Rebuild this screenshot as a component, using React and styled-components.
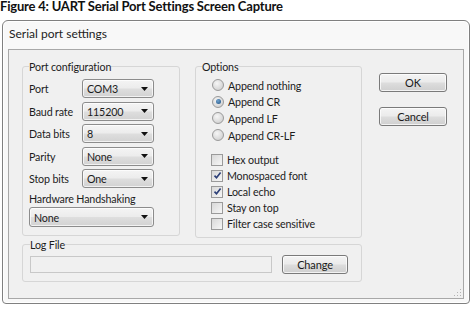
import React from "react";
import styled, { createGlobalStyle } from "styled-components";

const GlobalStyle = createGlobalStyle`
  html, body { margin: 0; padding: 0; background: #fff; }
  body { font-family: Lato, "Liberation Sans", sans-serif; color: #1c1c1c; }
`;

const Page = styled.div`
  width: 474px;
  height: 313px;
  overflow: hidden;
`;

const Caption = styled.div`
  height: 14px;
  overflow: hidden;
  font: bold 13px/12px Lato, "Liberation Sans", sans-serif;
  letter-spacing: -0.2px;
  white-space: nowrap;
  color: #111;
`;

const Window = styled.div`
  margin: 6px 0 0 2px;
  width: 468px;
  height: 284px;
  box-sizing: border-box;
  border: 1px solid #808080;
  border-radius: 6px 6px 4px 4px;
  background: #f8f8f8;
  box-shadow: inset 0 0 0 1px #fff;
  display: flex;
  flex-direction: column;
`;

const TitleBar = styled.div`
  height: 28px;
  padding: 0 0 4px 6px;
  box-sizing: border-box;
  display: flex;
  align-items: center;
  font-size: 12px;
  color: #222;
`;

const Client = styled.div`
  position: relative;
  margin-left: 5px;
  width: 456px;
  height: 250px;
  box-sizing: border-box;
  border: 1px solid #a8a8a8;
  background: #f0f0f0;
  padding: 10px 0 0 13px;
  font-size: 10.7px;
  letter-spacing: -0.15px;
`;

const TopRow = styled.div`
  display: flex;
  align-items: flex-start;
`;

const Group = styled.fieldset`
  margin: 0 ${(p) => p.$gap || 0}px 0 0;
  padding: ${(p) => p.$pad || "6px 6px 0"};
  width: ${(p) => p.$w}px;
  height: ${(p) => p.$h}px;
  box-sizing: border-box;
  border: 1px solid #d6d6d6;
  border-radius: 3px;
  min-width: 0;
`;

const Legend = styled.legend`
  padding: 0;
  font-size: 10.7px;
  line-height: 13px;
  color: #1c1c1c;
`;

const FieldGrid = styled.div`
  display: grid;
  grid-template-columns: 53px 72px;
  grid-auto-rows: 19px;
  row-gap: 3.5px;
  align-items: center;
`;

const Label = styled.span`
  white-space: nowrap;
`;

const Combo = styled.div`
  display: flex;
  align-items: center;
  justify-content: space-between;
  width: ${(p) => p.$w || 72}px;
  height: ${(p) => p.$h || 19}px;
  box-sizing: border-box;
  padding: 0 5px 0 4px;
  border: 1px solid #8c8c8c;
  border-radius: 3px;
  background: linear-gradient(#f4f4f4, #ececec 48%, #dedede 52%, #d2d2d2);
  box-shadow: inset 0 0 0 1px rgba(255, 255, 255, 0.7);
`;

const WideLabel = styled.div`
  margin-top: 4px;
  line-height: 13px;
`;

const WideCombo = styled(Combo)`
  margin-top: 2px;
`;

const OptionList = styled.div`
  display: flex;
  flex-direction: column;
  margin-top: ${(p) => p.$top}px;
`;

const OptionRow = styled.div`
  display: flex;
  align-items: center;
  gap: 4px;
  height: ${(p) => p.$h}px;
  padding-left: ${(p) => p.$indent}px;
  white-space: nowrap;
`;

const Radio = styled.span`
  position: relative;
  width: 12px;
  height: 12px;
  box-sizing: border-box;
  border-radius: 50%;
  border: 1px solid #9a9a9a;
  background: radial-gradient(circle at 40% 35%, #f6f6f6, #d6d6d6 70%, #c4c4c4);

  &::after {
    content: "";
    display: ${(p) => (p.$on ? "block" : "none")};
    position: absolute;
    left: 2.5px;
    top: 2.5px;
    width: 5px;
    height: 5px;
    border-radius: 50%;
    background: radial-gradient(circle at 40% 35%, #6fa3cf, #1f4f80);
  }
`;

const Check = styled.span`
  display: flex;
  align-items: center;
  justify-content: center;
  width: 12px;
  height: 12px;
  box-sizing: border-box;
  border: 1px solid #9a9a9a;
  background: linear-gradient(135deg, #d8d8d8, #f6f6f6);
`;

const ButtonColumn = styled.div`
  display: flex;
  flex-direction: column;
  gap: 15px;
  margin: 13px 0 0 17px;
`;

const Button = styled.div`
  display: flex;
  align-items: center;
  justify-content: center;
  width: ${(p) => p.$w}px;
  height: 19px;
  box-sizing: border-box;
  border: 1px solid #7a7a7a;
  border-radius: 3px;
  background: linear-gradient(#f4f4f4, #ebebeb 48%, #dddddd 52%, #cfcfcf);
  box-shadow: inset 0 0 0 1px rgba(255, 255, 255, 0.75);
  font-size: 11px;
  color: #1a1a1a;
`;

const LogRow = styled.div`
  display: flex;
  align-items: center;
  gap: 10px;
  margin-top: 4px;
`;

const PathField = styled.div`
  width: 242px;
  height: 17px;
  box-sizing: border-box;
  border: 1px solid #c8c8c8;
  background: #f0f0f0;
`;

const Grip = styled.div`
  position: absolute;
  right: 2px;
  bottom: 2px;
  width: 8px;
  height: 8px;
  background-image: radial-gradient(circle, #b4b4b4 0.9px, transparent 1px);
  background-size: 3px 3px;
  clip-path: polygon(100% 0, 100% 100%, 0 100%);
`;

const Arrow = () => (
  <svg width="7" height="4" viewBox="0 0 7 4">
    <path d="M0 0h7L3.5 4z" fill="#111" />
  </svg>
);

const Tick = () => (
  <svg width="9" height="9" viewBox="0 0 9 9">
    <path d="M1.5 4.6l2 2.2L7.6 1.4" fill="none" stroke="#2c3f78" strokeWidth="1.6" />
  </svg>
);

const portFields = [
  ["Port", "COM3"],
  ["Baud rate", "115200"],
  ["Data bits", "8"],
  ["Parity", "None"],
  ["Stop bits", "One"],
];

const radios = [
  ["Append nothing", false],
  ["Append CR", true],
  ["Append LF", false],
  ["Append CR-LF", false],
];

const checks = [
  ["Hex output", false],
  ["Monospaced font", true],
  ["Local echo", true],
  ["Stay on top", false],
  ["Filter case sensitive", false],
];

export default function App() {
  return (
    <Page>
      <GlobalStyle />
      <Caption>Figure 4: UART Serial Port Settings Screen Capture</Caption>
      <Window>
        <TitleBar>Serial port settings</TitleBar>
        <Client>
          <TopRow>
            <Group $w={158} $h={176} $gap={15}>
              <Legend>Port configuration</Legend>
              <FieldGrid>
                {portFields.map(([label, value]) => (
                  <React.Fragment key={label}>
                    <Label>{label}</Label>
                    <Combo>
                      <span>{value}</span>
                      <Arrow />
                    </Combo>
                  </React.Fragment>
                ))}
              </FieldGrid>
              <WideLabel>Hardware Handshaking</WideLabel>
              <WideCombo $w={125} $h={20}>
                <span>None</span>
                <Arrow />
              </WideCombo>
            </Group>

            <Group $w={167} $h={178} $pad="0 6px">
              <Legend>Options</Legend>
              <OptionList $top={4}>
                {radios.map(([label, on]) => (
                  <OptionRow key={label} $h={16.6} $indent={10}>
                    <Radio $on={on} />
                    {label}
                  </OptionRow>
                ))}
              </OptionList>
              <OptionList $top={8.5}>
                {checks.map(([label, on]) => (
                  <OptionRow key={label} $h={16} $indent={9}>
                    <Check>{on && <Tick />}</Check>
                    {label}
                  </OptionRow>
                ))}
              </OptionList>
            </Group>

            <ButtonColumn>
              <Button $w={68}>OK</Button>
              <Button $w={68}>Cancel</Button>
            </ButtonColumn>
          </TopRow>

          <Group $w={340} $h={44} $pad="0 13px 0 7px">
            <Legend>Log File</Legend>
            <LogRow>
              <PathField />
              <Button $w={66}>Change</Button>
            </LogRow>
          </Group>
          <Grip />
        </Client>
      </Window>
    </Page>
  );
}
